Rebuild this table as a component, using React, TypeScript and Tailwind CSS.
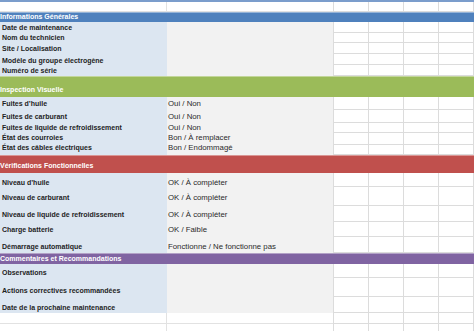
type Line = {
  label: string;
  value?: string;
  h: string;
  pb: string;
};

type Section = {
  title: string;
  bar: string;
  h: string;
  pb: string;
  rows: Line[];
};

const sections: Section[] = [
  {
    title: "Informations Générales",
    bar: "bg-[#4f81bd]",
    h: "h-[10px]",
    pb: "pb-[2px]",
    rows: [
      { label: "Date de maintenance", h: "h-[11px]", pb: "pb-[1px]" },
      { label: "Nom du technicien", h: "h-[10px]", pb: "pb-[1px]" },
      { label: "Site / Localisation", h: "h-[11px]", pb: "pb-[1px]" },
      { label: "Modèle du groupe électrogène", h: "h-[11px]", pb: "pb-0" },
      { label: "Numéro de série", h: "h-[11px]", pb: "pb-[1px]" },
    ],
  },
  {
    title: "Inspection Visuelle",
    bar: "bg-[#9bbb59]",
    h: "h-[21px]",
    pb: "pb-[4px]",
    rows: [
      { label: "Fuites d’huile", value: "Oui / Non", h: "h-[13px]", pb: "pb-[2px]" },
      { label: "Fuites de carburant", value: "Oui / Non", h: "h-[13px]", pb: "pb-[2px]" },
      { label: "Fuites de liquide de refroidissement", value: "Oui / Non", h: "h-[10px]", pb: "pb-[1px]" },
      { label: "État des courroies", value: "Bon / À remplacer", h: "h-[12px]", pb: "pb-[3px]" },
      { label: "État des câbles électriques", value: "Bon / Endommagé", h: "h-[10px]", pb: "pb-[3px]" },
    ],
  },
  {
    title: "Vérifications Fonctionnelles",
    bar: "bg-[#c0504d]",
    h: "h-[18px]",
    pb: "pb-[4px]",
    rows: [
      { label: "Niveau d’huile", value: "OK / À compléter", h: "h-[14px]", pb: "pb-0" },
      { label: "Niveau de carburant", value: "OK / À compléter", h: "h-[19px]", pb: "pb-[4px]" },
      { label: "Niveau de liquide de refroidissement", value: "OK / À compléter", h: "h-[16px]", pb: "pb-[3px]" },
      { label: "Charge batterie", value: "OK / Faible", h: "h-[15px]", pb: "pb-[3px]" },
      { label: "Démarrage automatique", value: "Fonctionne / Ne fonctionne pas", h: "h-[16px]", pb: "pb-[2px]" },
    ],
  },
  {
    title: "Commentaires et Recommandations",
    bar: "bg-[#8064a2]",
    h: "h-[11px]",
    pb: "pb-[2px]",
    rows: [
      { label: "Observations", h: "h-[14px]", pb: "pb-[1px]" },
      { label: "Actions correctives recommandées", h: "h-[19px]", pb: "pb-[2px]" },
      { label: "Date de la prochaine maintenance", h: "h-[16px]", pb: "pb-[1px]" },
    ],
  },
];

function EmptyCols() {
  return (
    <>
      <div className="w-[35px] shrink-0 border-l border-b border-[#dcdcdc]" />
      <div className="w-[35px] shrink-0 border-l border-b border-[#dcdcdc]" />
      <div className="w-[35px] shrink-0 border-l border-b border-[#dcdcdc]" />
      <div className="w-[35px] shrink-0 border-l border-b border-[#dcdcdc]" />
      <div className="flex-1 border-l border-b border-[#dcdcdc]" />
    </>
  );
}

function BlankRow({ h }: { h: string }) {
  return (
    <div className={`flex ${h} bg-white`}>
      <div className="w-[167px] shrink-0 border-r border-b border-[#e2e2e2]" />
      <div className="w-[166px] shrink-0 border-b border-[#e2e2e2]" />
      <EmptyCols />
    </div>
  );
}

export default function App() {
  return (
    <div
      className="h-[331px] w-[474px] overflow-hidden bg-white text-[#1e1e1e]"
      style={{ fontFamily: '"Liberation Sans", Arial, sans-serif' }}
    >
      <div className="h-[2px] bg-[#7b9dcc]" />
      <BlankRow h="h-[10px]" />

      {sections.map((s) => (
        <div key={s.title}>
          <div className={`flex items-end ${s.h} ${s.pb} ${s.bar} border-t border-white/40`}>
            <span className="whitespace-nowrap text-[7px] leading-[7px] font-bold text-white">
              {s.title}
            </span>
          </div>
          {s.rows.map((r) => (
            <div key={r.label} className={`flex ${r.h}`}>
              <div className={`flex w-[167px] shrink-0 items-end bg-[#dce6f1] pl-[2px] ${r.pb}`}>
                <span className="whitespace-nowrap text-[7px] leading-[8px] font-bold">
                  {r.label}
                </span>
              </div>
              <div className={`relative flex w-[166px] shrink-0 items-end bg-[#f2f2f2] pl-[1px] ${r.pb}`}>
                {r.value && (
                  <span className="whitespace-nowrap text-[7.8px] leading-[8px] text-[#2a2a2a]">
                    {r.value}
                  </span>
                )}
              </div>
              <EmptyCols />
            </div>
          ))}
        </div>
      ))}

      <BlankRow h="h-[11px]" />
      <BlankRow h="h-[12px]" />
    </div>
  );
}
